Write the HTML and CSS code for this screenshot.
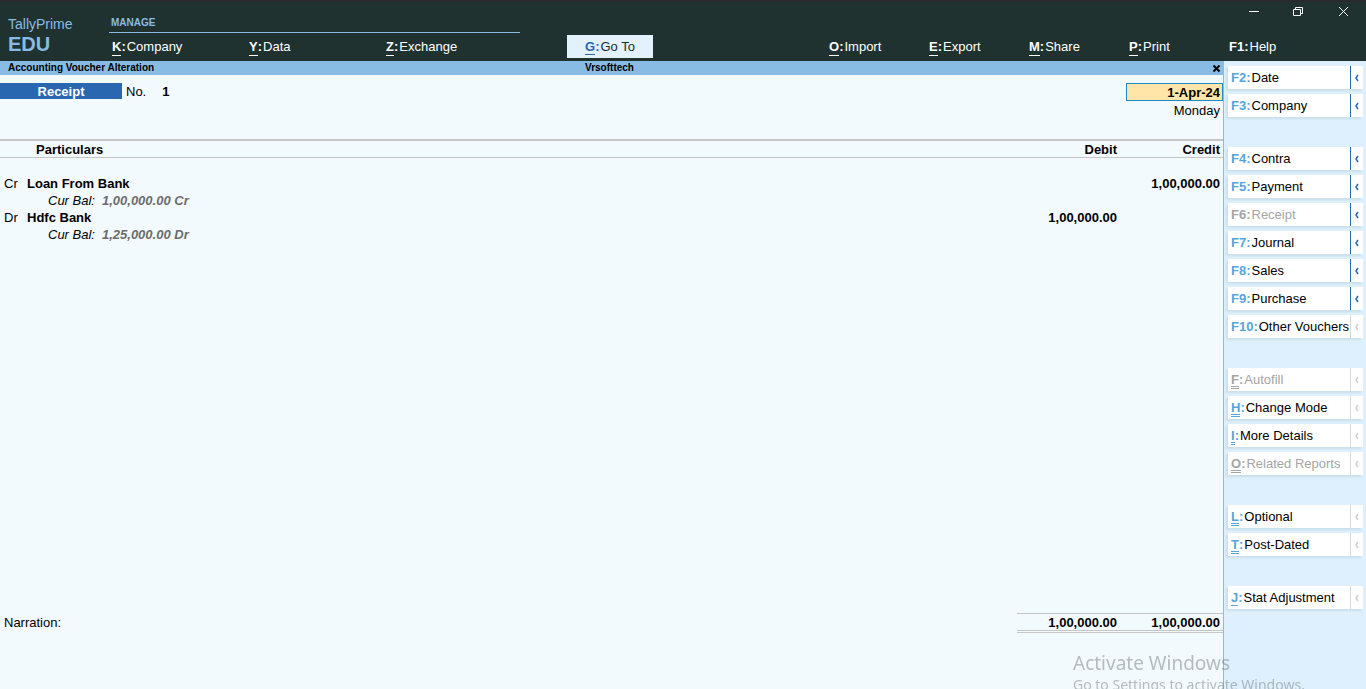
FILE: index.html
```
<!DOCTYPE html>
<html lang="en">
<head>
<meta charset="utf-8">
<meta name="viewport" content="width=device-width, initial-scale=1">
<title>TallyPrime EDU - Accounting Voucher Alteration</title>
<link rel="stylesheet" href="styles.css">
</head>
<body>
<div class="app">
  <header class="topbar">
    <div class="brand">
      <span class="brand-name">TallyPrime</span>
      <span class="brand-edition">EDU</span>
    </div>
    <nav class="manage">
      <div class="manage-title">MANAGE</div>
      <div class="manage-menu">
        <button class="menu-item"><b><u>K</u>:</b>Company</button>
        <button class="menu-item"><b><u>Y</u>:</b>Data</button>
        <button class="menu-item"><b><u>Z</u>:</b>Exchange</button>
      </div>
    </nav>
    <button class="goto"><b><u>G</u>:</b>Go To</button>
    <div class="topbar-right">
      <div class="window-controls">
        <button class="win-btn" aria-label="Minimize"><svg width="12" height="12" viewBox="0 0 12 12"><path d="M1 5.5h10"/></svg></button>
        <button class="win-btn" aria-label="Restore"><svg width="12" height="12" viewBox="0 0 12 12"><path d="M.5 3.500h7v6h-7zM2.500 3.500v-2h7v6h-2"/></svg></button>
        <button class="win-btn" aria-label="Close"><svg width="12" height="12" viewBox="0 0 12 12"><path d="M1 1l9 9M10 1l-9 9"/></svg></button>
      </div>
      <nav class="tools">
        <button class="menu-item"><b><u>O</u>:</b>Import</button>
        <button class="menu-item"><b><u>E</u>:</b>Export</button>
        <button class="menu-item"><b><u>M</u>:</b>Share</button>
        <button class="menu-item"><b><u>P</u>:</b>Print</button>
        <button class="menu-item"><b>F1:</b>Help</button>
      </nav>
    </div>
  </header>

  <main class="voucher">
    <div class="titlebar">
      <h1 class="screen-title">Accounting Voucher Alteration</h1>
      <span class="company">Vrsofttech</span>
      <button class="close" aria-label="Close voucher"><svg width="9" height="9" viewBox="0 0 9 9"><path d="M1.500 1.500l6 6M7.500 1.500l-6 6"/></svg></button>
    </div>
    <div class="voucher-head">
      <span class="voucher-type">Receipt</span>
      <span class="voucher-no">No.</span>
      <b class="voucher-no-value">1</b>
      <div class="voucher-date">
        <input class="date-input" type="text" value="1-Apr-24" aria-label="Voucher date">
        <span class="weekday">Monday</span>
      </div>
    </div>
    <table class="entries">
      <thead>
        <tr><th class="particulars" colspan="2">Particulars</th><th class="amount">Debit</th><th class="amount">Credit</th></tr>
      </thead>
      <tbody>
        <tr><td class="side">Cr</td><td class="ledger">Loan From Bank</td><td class="amount"></td><td class="amount">1,00,000.00</td></tr>
        <tr><td></td><td class="balance">Cur Bal:<b>1,00,000.00 Cr</b></td><td></td><td></td></tr>
        <tr><td class="side">Dr</td><td class="ledger">Hdfc Bank</td><td class="amount">1,00,000.00</td><td class="amount"></td></tr>
        <tr><td></td><td class="balance">Cur Bal:<b>1,25,000.00 Dr</b></td><td></td><td></td></tr>
      </tbody>
    </table>
    <footer class="voucher-foot">
      <span class="narration">Narration:</span>
      <div class="totals"><span class="total">1,00,000.00</span><span class="total">1,00,000.00</span></div>
    </footer>
  </main>

  <aside class="actions">
    <div class="group">
      <button class="action open"><b>F2:</b>Date<svg class="chev" viewBox="0 0 12 23"><path d="M7 9l-2 3 2 3"/></svg></button>
      <button class="action open"><b>F3:</b>Company<svg class="chev" viewBox="0 0 12 23"><path d="M7 9l-2 3 2 3"/></svg></button>
    </div>
    <div class="group">
      <button class="action open"><b>F4:</b>Contra<svg class="chev" viewBox="0 0 12 23"><path d="M7 9l-2 3 2 3"/></svg></button>
      <button class="action open"><b>F5:</b>Payment<svg class="chev" viewBox="0 0 12 23"><path d="M7 9l-2 3 2 3"/></svg></button>
      <button class="action open" disabled><b>F6:</b>Receipt<svg class="chev" viewBox="0 0 12 23"><path d="M7 9l-2 3 2 3"/></svg></button>
      <button class="action open"><b>F7:</b>Journal<svg class="chev" viewBox="0 0 12 23"><path d="M7 9l-2 3 2 3"/></svg></button>
      <button class="action open"><b>F8:</b>Sales<svg class="chev" viewBox="0 0 12 23"><path d="M7 9l-2 3 2 3"/></svg></button>
      <button class="action open"><b>F9:</b>Purchase<svg class="chev" viewBox="0 0 12 23"><path d="M7 9l-2 3 2 3"/></svg></button>
      <button class="action"><b>F10:</b>Other Vouchers<svg class="chev" viewBox="0 0 12 23"><path d="M7 9l-2 3 2 3"/></svg></button>
    </div>
    <div class="group">
      <button class="action" disabled><b><u class="double">F</u>:</b>Autofill<svg class="chev" viewBox="0 0 12 23"><path d="M7 9l-2 3 2 3"/></svg></button>
      <button class="action"><b><u class="double">H</u>:</b>Change Mode<svg class="chev" viewBox="0 0 12 23"><path d="M7 9l-2 3 2 3"/></svg></button>
      <button class="action"><b><u class="double">I</u>:</b>More Details<svg class="chev" viewBox="0 0 12 23"><path d="M7 9l-2 3 2 3"/></svg></button>
      <button class="action" disabled><b><u class="double">O</u>:</b>Related Reports<svg class="chev" viewBox="0 0 12 23"><path d="M7 9l-2 3 2 3"/></svg></button>
    </div>
    <div class="group">
      <button class="action"><b><u class="double">L</u>:</b>Optional<svg class="chev" viewBox="0 0 12 23"><path d="M7 9l-2 3 2 3"/></svg></button>
      <button class="action"><b><u class="double">T</u>:</b>Post-Dated<svg class="chev" viewBox="0 0 12 23"><path d="M7 9l-2 3 2 3"/></svg></button>
    </div>
    <div class="group">
      <button class="action"><b><u>J</u>:</b>Stat Adjustment<svg class="chev" viewBox="0 0 12 23"><path d="M7 9l-2 3 2 3"/></svg></button>
    </div>
  </aside>

  <div class="watermark">
    <div class="watermark-title">Activate Windows</div>
    <div class="watermark-text">Go to Settings to activate Windows.</div>
  </div>
</div>
</body>
</html>
```
FILE: styles.css
```
* { box-sizing: border-box; }

body {
  margin: 0;
  font-family: "Liberation Sans", Arial, sans-serif;
  font-size: 13px;
  line-height: 17px;
  color: #000;
}

button {
  margin: 0;
  padding: 0;
  border: 0;
  background: none;
  color: inherit;
  font: inherit;
  text-align: left;
  white-space: nowrap;
  cursor: pointer;
}

b { margin-right: 1px; }

u {
  display: inline-block;
  text-decoration: none;
  border-bottom: 1px solid currentColor;
}

.app {
  display: grid;
  grid-template-columns: minmax(0, 1fr) 142px;
  grid-template-rows: auto 1fr;
  height: 100vh;
  overflow: hidden;
}

/* Top bar */
.topbar {
  grid-column: 1 / -1;
  display: flex;
  align-items: flex-end;
  height: 61px;
  border-top: 2px solid #2a292b;
  background: #1f3230;
  color: #fff;
}

.brand {
  display: flex;
  flex-direction: column;
  width: 109px;
  padding: 0 0 6px 8px;
  color: #88bce4;
}

.brand-name { font-size: 14px; line-height: 18px; }
.brand-edition { font-size: 20px; line-height: 22px; font-weight: bold; }

.manage { width: 411px; }

.manage-title {
  padding: 0 2px 2px;
  border-bottom: 1px solid #88bce4;
  font-size: 10px;
  line-height: 14px;
  font-weight: bold;
  color: #88bce4;
}

.manage-menu {
  display: grid;
  grid-template-columns: repeat(3, 137px);
  padding: 5px 0 5px 3px;
}

.menu-item { line-height: 18px; }
.menu-item u { line-height: 17px; }

.goto {
  height: 23px;
  margin: 0 0 3px 47px;
  padding: 0 18px;
  background: #e2f1fc;
  color: #1f2a30;
}

.goto b { color: #2a67b1; }
.goto u { line-height: 15px; }

.topbar-right {
  display: flex;
  flex-direction: column;
  justify-content: space-between;
  align-self: stretch;
  width: 537px;
  margin-left: auto;
}

.window-controls {
  display: flex;
  justify-content: flex-end;
  gap: 33px;
  padding: 4px 16px 0 0;
}

.win-btn { display: flex; }

svg { fill: none; stroke: currentColor; }

.tools {
  display: grid;
  grid-template-columns: repeat(5, 100px);
  padding-bottom: 5px;
}

/* Voucher screen */
.voucher {
  display: flex;
  flex-direction: column;
  border-right: 1px solid #88bce4;
  background: #f2fafd;
}

.titlebar {
  display: grid;
  grid-template-columns: 1fr auto 1fr;
  align-items: center;
  height: 14px;
  padding: 0 2px 0 8px;
  background: #88bce4;
  font-size: 10px;
  line-height: 14px;
  font-weight: bold;
}

.screen-title { margin: 0; font-size: inherit; }
.company { margin-right: 10px; }
.close { display: flex; justify-self: end; }
.close svg { stroke-width: 2; }

.voucher-head {
  display: flex;
  align-items: flex-start;
  height: 64px;
  padding-top: 8px;
}

.voucher-type {
  width: 122px;
  height: 16px;
  background: #2a67b1;
  color: #fff;
  font-weight: bold;
  text-align: center;
}

.voucher-no { padding-left: 4px; }
.voucher-no-value { margin-left: 16px; }

.voucher-date {
  display: flex;
  flex-direction: column;
  width: 97px;
  margin-left: auto;
  text-align: right;
}

.date-input {
  width: 100%;
  height: 18px;
  padding: 0 2px;
  border: 1px solid #1c8ac8;
  background: #ffe6a8;
  color: #000;
  font: bold 13px "Liberation Sans", Arial, sans-serif;
  text-align: right;
  outline: 0;
}

.weekday { padding: 1px 3px 0 0; }

.entries {
  width: 100%;
  border-collapse: separate;
  border-spacing: 0;
  table-layout: auto;
}

.entries th {
  height: 19px;
  padding: 1px 0 0;
  border-top: 2px solid #c6c6c6;
  border-bottom: 1px solid #c6c6c6;
  line-height: 15px;
  text-align: left;
}

.entries td { height: 17px; padding: 0; line-height: 17px; }
.entries tbody::before { content: ""; display: block; height: 17px; }
.entries .particulars { padding-left: 36px; }

.entries .amount {
  width: 103px;
  padding-right: 3px;
  font-weight: bold;
  text-align: right;
}

.entries .side { width: 27px; padding-left: 4px; }
.ledger { font-weight: bold; }
.entries .balance { padding-left: 21px; font-style: italic; }
.balance b { margin-left: 7px; color: #6c6c6c; }

.voucher-foot {
  display: flex;
  justify-content: space-between;
  margin-top: auto;
  padding-bottom: 56px;
}

.narration { padding: 1px 0 0 4px; }

.totals {
  display: grid;
  grid-template-columns: 103px 103px;
  padding-top: 1px;
  border-top: 1px solid #c6c6c6;
  border-bottom: 3px double #c6c6c6;
}

.total {
  padding-right: 3px;
  line-height: 15px;
  font-weight: bold;
  text-align: right;
}

/* Action sidebar */
.actions {
  display: flex;
  flex-direction: column;
  gap: 30px;
  padding: 5px 3px 0 4px;
  background: #def0fd;
}

.group { display: flex; flex-direction: column; gap: 5px; }

.action {
  display: flex;
  align-items: center;
  height: 23px;
  padding-left: 3px;
  background: #fff;
  box-shadow: -2px 2px 2px #cbdfec;
}

.action b { color: #56a5dc; }
.action u { line-height: 14px; }
.action .double { line-height: 13px; border-bottom: 3px double currentColor; }
.action:disabled, .action:disabled b { color: #a5a5a5; }

.chev {
  flex: none;
  width: 13px;
  height: 23px;
  margin-left: auto;
  border-left: 1px solid #d9d9d9;
  color: #d0d0d0;
  stroke-width: 1.5;
}

.open .chev, .open:disabled .chev { border-left-color: #2a67b1; color: #2a67b1; }

/* System activation notice over the window */
.watermark {
  position: fixed;
  right: 57px;
  bottom: -6px;
  width: 236px;
  font-family: "Noto Sans", "Open Sans", sans-serif;
  color: rgba(120, 125, 130, 0.5);
  white-space: nowrap;
  pointer-events: none;
}

.watermark-title { font-size: 19px; line-height: 24px; }
.watermark-text { font-size: 14px; line-height: 20px; }
```
